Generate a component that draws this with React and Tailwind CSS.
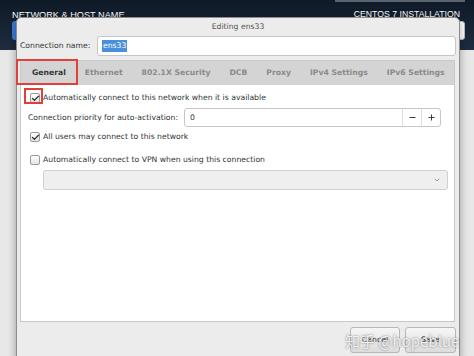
import { Check, ChevronDown, Minus, Plus } from "lucide-react";

const tabs = [
  "General",
  "Ethernet",
  "802.1X Security",
  "DCB",
  "Proxy",
  "IPv4 Settings",
  "IPv6 Settings",
];

function Box({ checked }) {
  return (
    <span className="grid h-[10px] w-[10px] shrink-0 place-items-center rounded-[2px] border border-[#9a9a9a] bg-gradient-to-b from-white to-[#e4e4e4]">
      {checked && <Check size={9} strokeWidth={3.5} className="text-[#2e3436]" />}
    </span>
  );
}

export default function App() {
  return (
    <div className="relative h-[356px] w-[474px] overflow-hidden whitespace-nowrap bg-[#e8e8e8] font-['DejaVu_Sans',sans-serif] text-[7.7px] text-[#2e3436]">
      {/* installer header */}
      <header className="flex h-[50px] items-start justify-between bg-gradient-to-b from-[#0f1a27] to-[#1e2d40] pl-3 pr-[9px] text-white">
        <div className="pt-[11px]">
          <p className="font-['Liberation_Sans',sans-serif] text-[9.2px] leading-none">NETWORK &amp; HOST NAME</p>
          <div className="mt-[1px] h-[19px] w-[40px] rounded-[3px] bg-[#3b7dd8]" />
        </div>
        <div className="flex flex-col items-end">
          <div className="h-[2px] w-[130px] bg-[#5a6470]" />
          <p className="mr-[5px] mt-[8px] font-['Liberation_Sans',sans-serif] text-[8.7px] leading-none">CENTOS 7 INSTALLATION</p>
          <div className="mt-[2px] h-[19px] w-[40px] rounded-[3px] border border-[#bbb] bg-white" />
        </div>
      </header>

      {/* dialog */}
      <div className="absolute left-[16px] top-[17px] flex h-[345px] w-[444px] flex-col rounded-t-[5px] border border-[#8e8e8e] bg-[#ececec] shadow-[0_2px_8px_rgba(0,0,0,.35)]">
        <div className="flex h-[18px] items-center justify-center text-[#555]">Editing ens33</div>
        <div className="flex items-center pl-[3px] pr-[3px]">
          <span className="w-[77px]">Connection name:</span>
          <div className="flex h-[20px] flex-1 items-center rounded-[3px] border border-[#c6c6c6] bg-white pl-[4px]">
            <span className="bg-[#4a90d9] px-[1px] text-white">ens33</span>
          </div>
        </div>

        <div className="ml-[3px] mr-[4px] mt-[4px] flex flex-col border border-[#c8c8c8]">
          <div className="flex h-[24px] items-stretch gap-[19px] bg-[#d4d4d4] pl-[11px] font-bold text-[#8a8a8a]">
            {tabs.map((t, i) => (
              <span
                key={t}
                className={
                  i === 0
                    ? "-mx-[6px] flex items-center border-b-2 border-[#4a90d9] px-[6px] pt-[2px] text-[#2e3436]"
                    : "flex items-center"
                }
              >
                {t}
              </span>
            ))}
          </div>
          <div className="flex h-[236px] flex-col bg-white px-[9px] pt-[8px]">
            <label className="flex h-[10px] items-center gap-[3px]">
              <Box checked />
              Automatically connect to this network when it is available
            </label>
            <div className="-ml-[2px] mt-[5px] flex items-center">
              <span className="w-[156px]">Connection priority for auto-activation:</span>
              <div className="flex h-[19px] w-[257px] items-center rounded-[3px] border border-[#c6c6c6] bg-white">
                <span className="flex-1 pl-[5px]">0</span>
                <span className="grid h-full w-[19px] place-items-center border-l border-[#ddd]">
                  <Minus size={9} strokeWidth={2.5} />
                </span>
                <span className="grid h-full w-[19px] place-items-center border-l border-[#ddd]">
                  <Plus size={9} strokeWidth={2.5} />
                </span>
              </div>
            </div>
            <label className="mt-[5px] flex h-[10px] items-center gap-[3px]">
              <Box checked />
              All users may connect to this network
            </label>
            <label className="mt-[13px] flex h-[10px] items-center gap-[3px]">
              <Box />
              Automatically connect to VPN when using this connection
            </label>
            <div className="ml-[13px] mt-[5px] flex h-[20px] w-[405px] items-center justify-end rounded-[3px] border border-[#d0d0d0] bg-[#efefef] pr-[6px] text-[#999]">
              <ChevronDown size={8} strokeWidth={3} />
            </div>
          </div>
        </div>

        <div className="mt-[5px] flex justify-end gap-[5px] pr-[3px]">
          <button className="flex h-[26px] w-[50px] items-end justify-center rounded-[3px] border border-[#b8b8b8] bg-gradient-to-b from-[#f6f6f6] to-[#dcdcdc] pb-[6px] text-[7.7px]">Cancel</button>
          <button className="flex h-[26px] w-[51px] items-end justify-center rounded-[3px] border border-[#b8b8b8] bg-gradient-to-b from-[#f6f6f6] to-[#dcdcdc] pb-[6px] text-[7.7px]">Save</button>
        </div>
      </div>

      {/* red highlight boxes */}
      <div className="absolute left-[16px] top-[59px] h-[26px] w-[62px] border-2 border-[#e0403a]" />
      <div className="absolute left-[24px] top-[88px] h-[16px] w-[19px] border-2 border-[#e0403a]" />

      {/* watermark */}
      <div className="absolute left-[345px] top-[333px] font-['Noto_Sans_CJK_SC',sans-serif] text-[15px] leading-none text-white/85 [text-shadow:0_0_2px_rgba(0,0,0,.55)]">
        知乎 @hopeblue
      </div>
    </div>
  );
}
